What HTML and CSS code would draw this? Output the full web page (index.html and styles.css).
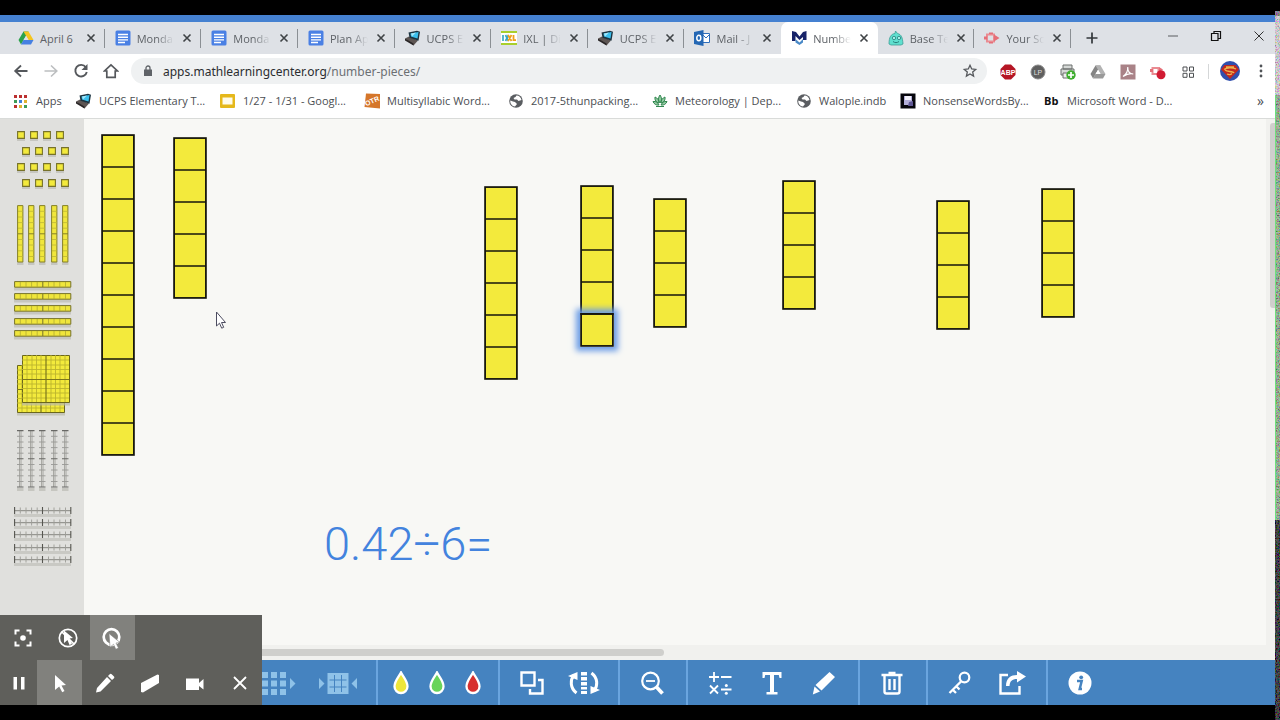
FILE: index.html
```
<!DOCTYPE html>
<html lang="en">
<head>
<meta charset="utf-8">
<title>Number Pieces</title>
<link rel="stylesheet" href="styles.css">
</head>
<body>
<svg class="defs" width="0" height="0" aria-hidden="true">
  <defs>
    <pattern id="unit" x="1" y="1" width="32" height="32" patternUnits="userSpaceOnUse"><path d="M0 0H32V32H0Z" fill="#f3ea3c" stroke="#15150c" stroke-width="1.7"/></pattern>
    <symbol id="one" viewBox="0 0 8 11"><path d="M0 7h8v3H0z" fill="#c6c6c0"/><path d="M.6.6h6.800v6.800H.6z" fill="#f3ea3c" stroke="#77722a" stroke-width="1.1"/></symbol>
    <symbol id="tenv" viewBox="0 0 7 61"><path d="M0 57h6.500v3H0z" fill="#c6c6c0"/><path d="M.6.6h5.300v56.400H.6z" fill="#f0e63c" stroke="#858026" stroke-width="1"/><path d="M1 6.300h5M1 12h5M1 17.600h5M1 23.200h5M1 34.500h5M1 40h5M1 45.800h5M1 51.500h5" stroke="#bdb535" stroke-width=".8"/><path d="M1 28.800h5" stroke="#858026"/></symbol>
    <symbol id="tenh" viewBox="0 0 58 10"><path d="M0 6.500h57v3H0z" fill="#c6c6c0"/><path d="M.6.6h56.200v5.600H.6z" fill="#f0e63c" stroke="#77722a" stroke-width="1"/><path d="M6.300 1v5M12 1v5M17.600 1v5M23.200 1v5M34.500 1v5M40 1v5M45.800 1v5M51.500 1v5" stroke="#b3ab30" stroke-width=".8"/><path d="M28.800 1v5" stroke="#77722a"/></symbol>
    <symbol id="hundred" viewBox="0 0 48 51"><path d="M0 47h48v3.500H0z" fill="#b9b9a8" opacity=".7"/><path d="M.5.5h47v47H.5z" fill="#f3ea3c" stroke="#6b671c"/><path d="M5 0v47M10 0v47M14.500 0v47M19 0v47M29 0v47M33.500 0v47M38 0v47M43 0v47M0 5h47M0 10h47M0 14.500h47M0 19h47M0 29h47M0 33.500h47M0 38h47M0 43h47" stroke="#bcb42e" stroke-width=".9"/><path d="M24 0v47M0 24.500h47" stroke="#7c771d" stroke-width="1.200"/></symbol>
    <symbol id="linev" viewBox="0 0 7 61"><path d="M0 58h6.500v3H0z" fill="#c6c6c0"/><path d="M2.500 0v57M4 0v57" stroke="#9a9a96" stroke-width=".8"/><path d="M0 6.300h6.500M0 12h6.500M0 17.600h6.500M0 23.200h6.500M0 34.500h6.500M0 40h6.500M0 45.800h6.500M0 51.500h6.500" stroke="#999995" stroke-width=".9"/><path d="M0 .6h6.500M0 28.800h6.500M0 57h6.500" stroke="#696966" stroke-width="1.100"/></symbol>
    <symbol id="lineh" viewBox="0 0 58 11"><path d="M0 7h57v3H0z" fill="#c9c9c4"/><path d="M0 3.700h57" stroke="#85857f"/><path d="M6.300 .5v6M12 .5v6M17.600 .5v6M23.200 .5v6M34.500 .5v6M40 .5v6M45.800 .5v6M51.500 .5v6" stroke="#9c9c96" stroke-width=".9"/><path d="M.6 0v7M28.500 0v7M56.800 0v7" stroke="#55554f" stroke-width="1.100"/></symbol>
    <symbol id="x" viewBox="0 0 10 10"><path d="M1.500 1.500l7 7M8.500 1.500l-7 7" stroke="#3f4346" stroke-width="1.600"/></symbol>
    <symbol id="doc" viewBox="0 0 16 16"><rect x=".5" y=".5" width="15" height="15" rx="1.500" fill="#4a80e4"/><path d="M3 4.500h10M3 7.200h10M3 9.900h10M3 12.500h7" stroke="#fff" stroke-width="1.400"/></symbol>
    <symbol id="laptop" viewBox="0 0 16 16"><path d="M0 8.500l4-2 9 4-4.500 5z" fill="#5d5553"/><path d="M0 8.500l8.500 5v2L0 10.500z" fill="#292526"/><path d="M3.500 2.500L12 .8l3 1-1.500 9-9-3z" fill="#1c3441"/><path d="M5.500 3.500l8-1.500-1 6.500-6.500-2z" fill="#3cc0ee"/><path d="M6 3.600l5-1-4 4z" fill="#a5e7fa"/></symbol>
    <symbol id="globe" viewBox="0 0 16 16"><circle cx="8" cy="8" r="6.800" fill="#5a5d61"/><path d="M8.500 2.500c2.500 0 4.500 2 5 4.500l-3 1-1.500-1.500H6.500L5.500 5l2-1zM2.300 7.500L5 8.500l2 .5 2 2-2 2.600c-3-.4-5-3-4.700-6.100z" fill="#fff"/></symbol>
  </defs>
</svg>

<div class="browser">
  <header class="chrome">
    <div class="tabstrip">
      <nav class="tabs" aria-label="Tabs">
        <div class="tab"><svg class="ico" viewBox="0 0 16 16"><path d="M5.500 1.500h5L8 6 3 14.500.5 10z" fill="#2ba24c"/><path d="M5.500 1.500h5l5 8.500h-5z" fill="#f5c51e"/><path d="M5.500 10h10L13 14.500H3z" fill="#4680e2"/><path d="M8 5.700l2.500 4.300h-5z" fill="#dee1e6"/></svg><span>April 6</span><button aria-label="Close tab"><svg><use href="#x"/></svg></button></div>
        <div class="tab"><svg class="ico"><use href="#doc"/></svg><span>Monda</span><button aria-label="Close tab"><svg><use href="#x"/></svg></button></div>
        <div class="tab"><svg class="ico"><use href="#doc"/></svg><span>Monda</span><button aria-label="Close tab"><svg><use href="#x"/></svg></button></div>
        <div class="tab"><svg class="ico"><use href="#doc"/></svg><span>Plan Ap</span><button aria-label="Close tab"><svg><use href="#x"/></svg></button></div>
        <div class="tab"><svg class="ico"><use href="#laptop"/></svg><span>UCPS E</span><button aria-label="Close tab"><svg><use href="#x"/></svg></button></div>
        <div class="tab"><svg class="ico" viewBox="0 0 16 16"><path fill="#fff" d="M0 1h16v14H0z"/><path fill="#a9cf2d" d="M0 1h16v2H0zM0 13h16v2H0z"/><path d="M2 5v6M4.500 5l3 6M7.500 5l-3 6" stroke="#3aa8c8" stroke-width="1.700"/><path d="M7 5l3.500 6M10.500 5L7 11M12.500 5v5.200H15" fill="none" stroke="#f0a01d" stroke-width="1.800"/></svg><span>IXL | Di</span><button aria-label="Close tab"><svg><use href="#x"/></svg></button></div>
        <div class="tab"><svg class="ico"><use href="#laptop"/></svg><span>UCPS E</span><button aria-label="Close tab"><svg><use href="#x"/></svg></button></div>
        <div class="tab last"><svg class="ico" viewBox="0 0 16 16"><path d="M8 3.500h7.500v9H8z" fill="#fff" stroke="#2f6ebb"/><path d="M9 5l3 3 3-3" fill="none" stroke="#2f6ebb"/><path d="M0 2l9.500-2v16L0 14z" fill="#2467b4"/><ellipse cx="4.800" cy="8" rx="2" ry="2.700" fill="none" stroke="#fff" stroke-width="1.500"/></svg><span>Mail - J</span><button aria-label="Close tab"><svg><use href="#x"/></svg></button></div>
        <div class="tab active"><svg class="ico" viewBox="0 0 16 16"><path d="M1 1l4 1 3.500 4.500L12 2l3.500-1v9H12V7L8.500 10 4.500 6v5H1z" fill="#172369"/><path d="M4.500 9l4 3.500L12 9v3.500L8.500 15l-4-2.500z" fill="#4a8ac8"/></svg><span>Numbe</span><button aria-label="Close tab"><svg><use href="#x"/></svg></button></div>
        <div class="tab"><svg class="ico" viewBox="0 0 16 16"><path d="M1 14C1 7 3 4 7 3.500L7.500 1l2 2.500c4 1 5 4 5.500 10.500L13 15H3z" fill="#5fe0cf" stroke="#3c9d96" stroke-width=".8"/><circle cx="6" cy="8" r="1.700" fill="#a2f0e7" stroke="#287f7c" stroke-width=".8"/><circle cx="11" cy="8" r="1.700" fill="#a2f0e7" stroke="#287f7c" stroke-width=".8"/><path d="M5 11.500c2 1.500 4 1.500 6 0" fill="none" stroke="#287f7c"/></svg><span>Base Te</span><button aria-label="Close tab"><svg><use href="#x"/></svg></button></div>
        <div class="tab"><svg class="ico" viewBox="0 0 16 16"><path d="M3 4.500h7v7H3z" fill="none" stroke="#ea8b92" stroke-width="2"/><path d="M10 4.500l5.500 3.500-5.500 3.500zM0 6.500h3v3H0zM5 2.500h4V4H5zM5 12h4v1.500H5z" fill="#e56f78"/></svg><span>Your Sc</span><button aria-label="Close tab"><svg><use href="#x"/></svg></button></div>
      </nav>
      <button class="newtab" aria-label="New tab"><svg viewBox="0 0 12 12"><path d="M6 .5v11M.5 6h11" stroke="#33373b" stroke-width="1.700"/></svg></button>
      <div class="winctl">
        <button aria-label="Minimize"><svg viewBox="0 0 12 12"><path d="M1 6h10" stroke="#5a5d61"/></svg></button>
        <button aria-label="Restore"><svg viewBox="0 0 12 12"><path d="M1.500 3.500h6.500v7H1.500zM4 3.500v-2h6.500v7H8" fill="none" stroke="#111" stroke-width="1.200"/></svg></button>
        <button aria-label="Close"><svg viewBox="0 0 12 12"><path d="M1.500 1.500l9 9M10.500 1.500l-9 9" stroke="#333"/></svg></button>
      </div>
    </div>

    <div class="navbar">
      <button aria-label="Back"><svg viewBox="0 0 16 16"><path d="M14.500 8H2.500M8 2.500L2.200 8 8 13.500" fill="none" stroke="#55585c" stroke-width="1.800"/></svg></button>
      <button aria-label="Forward"><svg viewBox="0 0 16 16"><path d="M1.500 8h12M8 2.500L13.800 8 8 13.500" fill="none" stroke="#bcbec0" stroke-width="1.600"/></svg></button>
      <button aria-label="Reload"><svg viewBox="0 0 16 16"><path d="M12.800 4.200A5.800 5.800 0 1 0 13.800 9" fill="none" stroke="#55585c" stroke-width="1.900"/><path d="M14.500 1v6h-6z" fill="#55585c"/></svg></button>
      <button aria-label="Home"><svg viewBox="0 0 16 16"><path d="M8 1.800L1.500 8H3.800v6.300h8.400V8h2.300z" fill="none" stroke="#55585c" stroke-width="1.700"/></svg></button>
      <div class="omnibox">
        <svg class="lock" viewBox="0 0 10 12"><path d="M1 4.500h8V11H1z" fill="#5f6368"/><path d="M3 5V3a2 2 0 0 1 4 0v2" fill="none" stroke="#5f6368" stroke-width="1.300"/></svg>
        <label class="url"><b>apps.mathlearningcenter.org</b>/number-pieces/<input aria-label="Address"></label>
        <button aria-label="Bookmark this page"><svg viewBox="0 0 16 16"><path d="M8 2.300l1.700 3.700 4 .4-3 2.700.9 4L8 11l-3.600 2.100.9-4-3-2.700 4-.4z" fill="none" stroke="#55585c" stroke-width="1.300"/></svg></button>
      </div>
      <div class="exts">
        <button aria-label="ABP"><svg viewBox="0 0 16 16"><path d="M5 .5h6L15.500 5v6L11 15.500H5L.5 11V5z" fill="#b51625"/><text x="8" y="10.700" font-size="7" font-weight="bold" text-anchor="middle" fill="#fff">ABP</text></svg></button>
        <button aria-label="LP"><svg viewBox="0 0 16 16"><circle cx="8" cy="8" r="7" fill="#5f5f5f" stroke="#8a8a8a"/><text x="8" y="10.500" font-size="7" text-anchor="middle" fill="#ddd">LP</text></svg></button>
        <button aria-label="Print"><svg viewBox="0 0 16 16"><path d="M3 1h9v4H3zM1 5h13v6H1z" fill="#d5d8d6" stroke="#6c716e"/><path d="M3 9h9v5H3z" fill="#eee" stroke="#6c716e"/><circle cx="11" cy="11" r="4.700" fill="#3fae2f"/><path d="M11 8v6M8 11h6" stroke="#fff" stroke-width="1.700"/></svg></button>
        <button aria-label="Drive"><svg viewBox="0 0 16 16"><path d="M5.500 1.500h5L8 6 3 14.500.5 10z" fill="#858585"/><path d="M5.500 1.500h5l5 8.500h-5z" fill="#b3b3b3"/><path d="M5.500 10h10L13 14.500H3z" fill="#999"/><path d="M8 5.700l2.500 4.300h-5z" fill="#fff"/></svg></button>
        <button aria-label="PDF"><svg viewBox="0 0 16 16"><path d="M.5.5h15v15H.5z" fill="#a98287"/><path d="M3 12.500c3-2 5-6 4.700-9.500 0 4 2 7 5.500 7-3-.8-7 .5-10.200 2.500z" fill="none" stroke="#fff" stroke-width="1.200"/></svg></button>
        <button aria-label="Recorder"><svg viewBox="0 0 16 16"><path d="M2.500 4h6v6h-6z" fill="none" stroke="#ea8b92" stroke-width="2"/><path d="M9 3l4 2.500L9 8zM0 5h3v3H0z" fill="#e56f78"/><circle cx="11" cy="10.800" r="4.500" fill="#d11b33"/></svg></button>
        <button aria-label="Grid"><svg viewBox="0 0 16 16"><path d="M3 3h4v4H3zM9.500 3h4v4h-4zM3 9.300h4v4H3zM9.500 9.300h4v4h-4z" fill="none" stroke="#4c4f52"/></svg></button>
      </div>
      <button class="avatar" aria-label="Profile"><svg viewBox="0 0 20 20"><circle cx="10" cy="10" r="10" fill="#304fae"/><path d="M4.500 4h11L19 8.500 10 18 1 8.500z" fill="#c2281f"/><path d="M6 6h8M4 8.500c3-2.500 9-2 12-.5M5 9c2 2 8 1 9 3M7 13c2 .8 4 .5 5-.5" fill="none" stroke="#ecb44b" stroke-width="1.300"/></svg></button>
      <button class="menu" aria-label="Menu"><svg viewBox="0 0 16 16"><circle cx="8" cy="3" r="1.400"/><circle cx="8" cy="8" r="1.400"/><circle cx="8" cy="13" r="1.400"/></svg></button>
    </div>

    <nav class="bookmarks" aria-label="Bookmarks">
      <a class="apps" href="#"><svg class="ico" viewBox="0 0 16 16"><path d="M0 2h3v3H0zM5 2h3v3H5zM10 2h3v3h-3zM0 12h3v3H0z" fill="#bb3030"/><path d="M0 7h3v3H0zM10 12h3v3h-3z" fill="#3f9c57"/><path d="M5 7h3v3H5z" fill="#4080d8"/><path d="M10 7h3v3h-3zM5 12h3v3H5z" fill="#dfb12f"/></svg>Apps</a>
      <a href="#"><svg class="ico"><use href="#laptop"/></svg>UCPS Elementary T...</a>
      <a href="#"><svg class="ico" viewBox="0 0 16 16"><rect x="0" y="1" width="15" height="14" rx="1" fill="#e5b81b"/><path d="M2.500 4.500h10v7h-10z" fill="#fffbe9"/></svg>1/27 - 1/31 - Googl...</a>
      <a href="#"><svg class="ico" viewBox="0 0 16 16"><path d="M2 .5l14 .5v14.500L.5 14z" fill="#d5762a"/><text x="8" y="10.500" font-size="7" font-weight="bold" fill="#fff" text-anchor="middle" transform="rotate(-24 8 8)">OTR</text></svg>Multisyllabic Word...</a>
      <a href="#"><svg class="ico"><use href="#globe"/></svg>2017-5thunpacking...</a>
      <a href="#"><svg class="ico" viewBox="0 0 16 16"><path d="M8 2c2 3 2 5 0 8-2-3-2-5 0-8zM3 4c2.500 1 4 3 4 6-3-.5-4.500-3-4-6zM13 4c-2.500 1-4 3-4 6 3-.5 4.500-3 4-6zM1 8.500c3-.5 5 1 6 3.500-3 .5-5-1-6-3.500zM15 8.500c-3-.5-5 1-6 3.500 3 .5 5-1 6-3.500z" fill="#93c9a2" stroke="#318850"/><path d="M4 13.500h8" stroke="#318850"/></svg>Meteorology | Dep...</a>
      <a class="short" href="#"><svg class="ico"><use href="#globe"/></svg>Walople.indb</a>
      <a href="#"><svg class="ico" viewBox="0 0 16 16"><path d="M.5.5h15v15H.5z" fill="#06060c"/><path d="M4 3h8v9H4z" fill="#b3aed9"/><path d="M5 3h6v4H5z" fill="#f2f1fa"/><path d="M9 9l4-1v5H8z" fill="#5f5794"/></svg>NonsenseWordsBy...</a>
      <a href="#"><b class="ico">Bb</b>Microsoft Word - D...</a>
      <button class="more" aria-label="More bookmarks">»</button>
    </nav>
  </header>

  <main class="app">
    <aside class="palette">
      <button aria-label="Ones"><svg viewBox="0 119 84 78">
        <g id="row"><use href="#one" x="17" y="131" width="8" height="11"/><use href="#one" x="30" y="131" width="8" height="11"/><use href="#one" x="43" y="131" width="8" height="11"/><use href="#one" x="56" y="131" width="8" height="11"/></g>
        <use href="#row" x="5" y="16"/><use href="#row" y="32"/><use href="#row" x="5" y="48"/></svg></button>
      <button aria-label="Vertical tens"><svg viewBox="0 197 84 76"><use href="#tenv" x="17" y="205" width="7" height="61"/><use href="#tenv" x="28" y="205" width="7" height="61"/><use href="#tenv" x="39" y="205" width="7" height="61"/><use href="#tenv" x="51" y="205" width="7" height="61"/><use href="#tenv" x="62" y="205" width="7" height="61"/></svg></button>
      <button aria-label="Horizontal tens"><svg viewBox="0 273 84 76"><use href="#tenh" x="14" y="281" width="58" height="10"/><use href="#tenh" x="14" y="293" width="58" height="10"/><use href="#tenh" x="14" y="305" width="58" height="10"/><use href="#tenh" x="14" y="318" width="58" height="10"/><use href="#tenh" x="14" y="330" width="58" height="10"/></svg></button>
      <button aria-label="Hundreds"><svg viewBox="0 349 84 74"><use href="#hundred" x="17" y="365" width="48" height="51"/><use href="#hundred" x="22" y="355" width="48" height="51"/></svg></button>
      <button aria-label="Vertical lines"><svg viewBox="0 423 84 76"><use href="#linev" x="17" y="430" width="7" height="61"/><use href="#linev" x="28" y="430" width="7" height="61"/><use href="#linev" x="39" y="430" width="7" height="61"/><use href="#linev" x="51" y="430" width="7" height="61"/><use href="#linev" x="62" y="430" width="7" height="61"/></svg></button>
      <button aria-label="Horizontal lines"><svg viewBox="0 499 84 76"><use href="#lineh" x="14" y="507" width="58" height="11"/><use href="#lineh" x="14" y="519" width="58" height="11"/><use href="#lineh" x="14" y="531" width="58" height="11"/><use href="#lineh" x="14" y="544" width="58" height="11"/><use href="#lineh" x="14" y="556" width="58" height="11"/></svg></button>
    </aside>
    <section class="board" aria-label="Workspace">
      <svg class="piece p1" width="34" height="322"><rect x="1" y="1" width="32" height="320"/></svg>
      <svg class="piece p2" width="34" height="162"><rect x="1" y="1" width="32" height="160"/></svg>
      <svg class="piece p3" width="34" height="194"><rect x="1" y="1" width="32" height="192"/></svg>
      <svg class="piece p4" width="34" height="130"><rect x="1" y="1" width="32" height="128"/></svg>
      <svg class="piece p5 selected" width="34" height="34"><rect x="1" y="1" width="32" height="32"/></svg>
      <svg class="piece p6" width="34" height="130"><rect x="1" y="1" width="32" height="128"/></svg>
      <svg class="piece p7" width="34" height="130"><rect x="1" y="1" width="32" height="128"/></svg>
      <svg class="piece p8" width="34" height="130"><rect x="1" y="1" width="32" height="128"/></svg>
      <svg class="piece p9" width="34" height="130"><rect x="1" y="1" width="32" height="128"/></svg>
      <svg class="cursor" viewBox="0 0 12 19" width="12" height="19"><path d="M1.500 1v14l3-2.800 2.200 5 2-.9-2.200-4.800h4z" fill="#fff" stroke="#4d4d60"/></svg>
      <p class="equation">0.42÷6=</p>
    </section>
    <div class="vscroll"><div></div></div>
    <div class="hscroll"><div></div></div>
  </main>

  <footer class="dock">
    <div class="group first">
      <button aria-label="Break apart"><svg class="pale" viewBox="0 0 44 24"><path d="M6 1h6v6H6zM15 1h6v6h-6zM24 1h6v6h-6zM6 9.500h6v6H6zM15 9.500h6v6h-6zM24 9.500h6v6h-6zM6 18h6v6H6zM15 18h6v6h-6zM24 18h6v6h-6zM34 7v11l5.500-5.500z"/></svg></button>
      <button aria-label="Group"><svg class="pale" viewBox="0 0 44 24"><path d="M11.500 2h21v21h-21zM3 7v11l5.500-5.500zM41 7v11l-5.500-5.500z"/><path d="M18.500 4v17M25.500 4v17M13.500 9h17M13.500 16h17" stroke="#4583c0"/></svg></button>
    </div>
    <div class="group drops">
      <button aria-label="Yellow"><svg viewBox="0 0 18 24"><path d="M9 1.500C6.500 6.500 2.500 10 2.500 15.500a6.500 6.500 0 0 0 13 0C15.500 10 11.500 6.500 9 1.500z" fill="#eee63a" stroke="#fff" stroke-width="2.300"/></svg></button>
      <button aria-label="Green"><svg viewBox="0 0 18 24"><path d="M9 1.500C6.500 6.500 2.500 10 2.500 15.500a6.500 6.500 0 0 0 13 0C15.500 10 11.500 6.500 9 1.500z" fill="#69d45a" stroke="#fff" stroke-width="2.300"/></svg></button>
      <button aria-label="Red"><svg viewBox="0 0 18 24"><path d="M9 1.500C6.500 6.500 2.500 10 2.500 15.500a6.500 6.500 0 0 0 13 0C15.500 10 11.500 6.500 9 1.500z" fill="#d7302f" stroke="#fff" stroke-width="2.300"/></svg></button>
    </div>
    <div class="group">
      <button aria-label="Duplicate"><svg viewBox="0 0 24 24"><path d="M1.500 1.500h13v13h-13zM18 9h4.500v13.500H10V18" fill="none" stroke="#fff" stroke-width="2.400"/></svg></button>
      <button aria-label="Rotate"><svg class="wide" viewBox="0 0 32 24"><path d="M13 1h6v3.500h-6zM13 6h6v3.500h-6zM13 11h6v3.500h-6zM13 16h6v2.500h-6zM13 20h6v3h-6z" fill="#fff"/><path d="M8.500 22C2 17 2 9 6 4M23.500 2c6.500 5 6.500 13 2.500 18" fill="none" stroke="#fff" stroke-width="3"/><path d="M0 5l9.500-4v8zM32 19l-9.500 4v-8z" fill="#fff"/></svg></button>
    </div>
    <div class="group">
      <button aria-label="Zoom out"><svg viewBox="0 0 24 24"><circle cx="10.500" cy="10" r="8.300" fill="none" stroke="#fff" stroke-width="2.200"/><path d="M6 10h9" stroke="#fff" stroke-width="1.800"/><path d="M16 15.500l6.500 7" stroke="#fff" stroke-width="3.700"/></svg></button>
    </div>
    <div class="group">
      <button aria-label="Math"><svg viewBox="0 0 24 24"><path d="M1 6h10M6 1v10M13 6h10.500M2 14.500l8 8M10 14.500l-8 8M13 18.500h10.500" stroke="#fff" stroke-width="1.800"/><circle cx="18.300" cy="14.500" r="1.500" fill="#fff"/><circle cx="18.300" cy="22.300" r="1.500" fill="#fff"/></svg></button>
      <button aria-label="Text"><svg viewBox="0 0 24 24"><path d="M2.500 1h19v6h-2l-.7-3H14v17h3.500v2.500h-11V21H10V4H5.200l-.7 3h-2z" fill="#fff"/></svg></button>
      <button aria-label="Draw"><svg viewBox="0 0 24 24"><path d="M17.500 1l5.500 5L9.500 19.500l-6-5.500zM2.500 15.500l5.500 5L.8 23.500z" fill="#fff"/></svg></button>
    </div>
    <div class="group">
      <button aria-label="Delete"><svg viewBox="0 0 24 24"><path d="M1.500 4h21M8.500 2h7" stroke="#fff" stroke-width="2.600"/><path d="M4.500 5v15.500q0 2 2 2h11q2 0 2-2V5M9.500 8v11M14.500 8v11" fill="none" stroke="#fff" stroke-width="2.400"/></svg></button>
    </div>
    <div class="group">
      <button aria-label="Key"><svg viewBox="0 0 24 24"><circle cx="16.500" cy="6.500" r="4.800" fill="none" stroke="#fff" stroke-width="2.200"/><path d="M13 10.500L1.500 22M4.500 18.500l3.500 3.500M8 15l3.500 3.500" stroke="#fff" stroke-width="2.300"/></svg></button>
      <button aria-label="Share"><svg class="share" viewBox="0 0 28 24"><path d="M10 4H2.500v18.500h19V15" fill="none" stroke="#fff" stroke-width="2.400"/><path d="M8 15c0-8 5-11 11-11V0l9 5.500-9 6V8c-5 0-7 2-7.500 7z" fill="#fff"/></svg></button>
    </div>
    <div class="group end">
      <button aria-label="Info"><svg viewBox="0 0 24 24"><circle cx="12" cy="12" r="11.500" fill="#fff"/><circle cx="13.200" cy="6.300" r="1.900" fill="#4583c0"/><path d="M9 10h4.700l-2 8H14" fill="none" stroke="#4583c0" stroke-width="2.500"/></svg></button>
    </div>
  </footer>

  <div class="recorder">
    <div class="rrow">
      <button aria-label="Focus"><svg viewBox="0 0 20 20"><path d="M2.500 6.500v-4h4M13.500 2.500h4v4M17.500 13.500v4h-4M6.500 17.500h-4v-4" fill="none" stroke="#fff" stroke-width="2"/><circle cx="10" cy="10" r="2.800" fill="#fff"/></svg></button>
      <button aria-label="Hide cursor"><svg viewBox="0 0 20 20"><circle cx="10" cy="10" r="8.700" fill="none" stroke="#fff" stroke-width="1.700"/><path d="M4 4l12 12" stroke="#fff" stroke-width="1.700"/><path d="M6 2.500l9 7.500-3.500.5L14 16l-2.500 1-2-5L6 15z" fill="#fff"/></svg></button>
      <button class="on" aria-label="Highlight clicks"><svg class="big" viewBox="0 0 24 24"><circle cx="10.500" cy="11" r="7.800" fill="none" stroke="#fff" stroke-width="2.700"/><path d="M8 7.500l11 9-4 .5 2.500 5-2.700 1.300-2.300-5-3.500 3z" fill="#fff" stroke="#81817d" stroke-width=".6"/></svg></button>
    </div>
    <div class="rrow">
      <button class="pause" aria-label="Pause"><svg viewBox="0 0 20 20"><path d="M4.500 4h3.500v12.500H4.500zM12 4h3.500v12.500H12z" fill="#fff"/></svg></button>
      <button class="on" aria-label="Pointer"><svg viewBox="0 0 20 20"><path d="M5 2l11 10-4.500.5 3 5.500-2.300 1.200-3-5.700L5 17z" fill="#fff"/></svg></button>
      <button aria-label="Pen"><svg viewBox="0 0 20 20"><path d="M12 4l4 4L5.500 18.500l-4.500 1 1-4.500zM13 3l2-2q.8-.6 1.700.2l2.300 2.300q.8.900 0 1.700L17 7z" fill="#fff"/></svg></button>
      <button aria-label="Eraser"><svg viewBox="0 0 20 20"><path d="M1 10L17.500 1.500l1.500.6V10L3 19.500l-2-.6z" fill="#fff"/></svg></button>
      <button aria-label="Camera"><svg viewBox="0 0 20 20"><path d="M1 5.500h13V10l4.500-4v10.500L14 13v4H1z" fill="#fff"/></svg></button>
      <button aria-label="Close"><svg viewBox="0 0 20 20"><path d="M4 4l12 12M16 4L4 16" stroke="#fff" stroke-width="1.800"/></svg></button>
    </div>
  </div>
</div>

<svg class="static" aria-hidden="true">
  <filter id="grain" x="0" y="0" width="1" height="1"><feTurbulence type="fractalNoise" baseFrequency=".7" numOctaves="2" seed="4"/><feColorMatrix values="3 0 0 0 -1  0 3 0 0 -1  0 0 3 0 -1  0 0 0 0 1"/></filter>
  <rect width="5" height="100%" fill="#04040a"/>
  <rect width="5" height="5" fill="#77657f"/><rect y="5" width="5" height="79" fill="#d7d0d8"/><rect y="84" width="5" height="425" fill="#84a67e"/>
  <rect width="5" height="100%" filter="url(#grain)" opacity=".35"/>
  <rect y="84" width="1" height="425" fill="#6fe07d"/>
</svg>
</body>
</html>
```
FILE: styles.css
```
* { box-sizing: border-box; }
body {
  margin: 0;
  display: grid;
  grid-template-columns: minmax(0, 1fr) 5px;
  height: 100vh;
  overflow: hidden;
  background: #000;
  font-family: "Open Sans", "Noto Sans", sans-serif;
  font-size: 11px;
  color: #4b4e52;
}
button {
  border: 0;
  padding: 0;
  background: none;
  color: inherit;
  font: inherit;
  display: grid;
  place-items: center;
  flex: none;
}
svg { display: block; }
.defs { position: absolute; }
.ico { width: 16px; height: 16px; flex: none; }
.static { width: 5px; height: 100%; padding-top: 11px; }

.browser {
  position: relative;
  display: flex;
  flex-direction: column;
  padding: 15px 0;
  min-height: 0;
}

/* tab strip */
.tabstrip {
  display: flex;
  height: 39px;
  border-top: 7px solid #4581d1;
  background: #dee1e6;
  padding-left: 8px;
}
.tabs { display: flex; flex: 0 1 1063px; min-width: 0; }
.tab {
  position: relative;
  flex: 1 1 0;
  min-width: 0;
  display: flex;
  align-items: center;
  padding: 0 9px 0 10px;
  gap: 6px;
}
.tab::after {
  content: "";
  position: absolute;
  right: 0;
  top: 7px;
  width: 1px;
  height: 19px;
  background: #8b8f94;
}
.tab.last::after, .tab.active::after { display: none; }
.tab span {
  flex: 1;
  white-space: nowrap;
  color: #5e6267;
  -webkit-mask-image: linear-gradient(90deg, #000 50%, transparent 95%);
  mask-image: linear-gradient(90deg, #000 50%, transparent 95%);
}
.tab:first-child span { -webkit-mask-image: none; mask-image: none; }
.tab button, .tab button svg { width: 10px; height: 10px; }
.tab.active { background: #fff; border-radius: 7px 7px 0 0; }
.newtab { width: 42px; }
.newtab svg { width: 12px; height: 12px; }
.winctl { display: flex; margin-left: auto; height: 28px; }
.winctl button { width: 43px; }
.winctl button:last-child { width: 38px; padding-left: 5px; }
.winctl svg { width: 12px; height: 12px; }

/* address row */
.navbar {
  display: flex;
  align-items: center;
  height: 34px;
  padding: 0 4px 0 6px;
  background: #fff;
}
.navbar > button { width: 30px; }
.navbar svg { width: 16px; height: 16px; }
.omnibox {
  display: flex;
  align-items: center;
  flex: 1;
  height: 26px;
  margin: 0 6px 0 5px;
  padding: 0 9px 0 12px;
  border-radius: 13px;
  background: #eff1f2;
}
.omnibox .lock { width: 10px; height: 12px; }
.url { display: flex; flex: 1; margin-left: 10px; font: 12px "Noto Sans", sans-serif; color: #6b6f73; }
.url b { font-weight: normal; color: #2b2d30; }
.url input { flex: 1; min-width: 0; border: 0; padding: 0; background: none; font: inherit; }
.exts { display: flex; border-right: 1px solid #d5d7d8; padding-right: 5px; }
.exts button { width: 30px; height: 15px; }
.exts text, .bookmarks text { font-family: "Liberation Sans", sans-serif; }
.navbar .avatar { width: 42px; }
.navbar .avatar svg { width: 20px; height: 20px; }
.navbar .menu { width: 20px; fill: #505357; }

/* bookmarks */
.bookmarks {
  display: flex;
  align-items: center;
  height: 31px;
  padding: 0 11px 5px 14px;
  border-bottom: 1px solid #d9dbd9;
  background: #fff;
}
.bookmarks a {
  display: flex;
  align-items: center;
  gap: 7px;
  flex: 0 0 144px;
  white-space: nowrap;
  color: #4b4e52;
  text-decoration: none;
}
.bookmarks .apps { flex-basis: 62px; gap: 6px; }
.bookmarks .short { flex-basis: 104px; }
.bookmarks b { color: #111; font-size: 11px; line-height: 16px; }
.more { margin-left: auto; font-size: 14px; line-height: 16px; }

/* workspace */
.app {
  flex: 1;
  min-height: 0;
  display: grid;
  grid-template: minmax(0, 1fr) 15px / 84px minmax(0, 1fr) 9px;
  background: #f8f8f5;
}
.palette { grid-row: 1 / 3; background: #e0e0dd; overflow: hidden; }
.palette button, .palette svg { width: 84px; }
.board { position: relative; overflow: hidden; }
.piece { position: absolute; fill: url(#unit); stroke: #15150c; stroke-width: 1.6px; }
.p1 { left: 17px; top: 15px; }
.p2 { left: 89px; top: 18px; }
.p3 { left: 400px; top: 67px; }
.p4 { left: 496px; top: 66px; }
.p5 { left: 496px; top: 194px; }
.p6 { left: 569px; top: 79px; }
.p7 { left: 698px; top: 61px; }
.p8 { left: 852px; top: 81px; }
.p9 { left: 957px; top: 69px; }
.selected { box-shadow: 0 0 6px 4px #6c9de6; }
.cursor { position: absolute; left: 131px; top: 192px; }
.equation {
  position: absolute;
  left: 240px;
  top: 397px;
  margin: 0;
  font: 300 47px/56px Roboto, sans-serif;
  color: #4383de;
}
.vscroll { background: #f1f1ee; padding: 4px 0 0 4px; }
.vscroll div { height: 185px; border-radius: 3px 0 0 3px; background: #cfcfcc; }
.hscroll { grid-column: 2 / 4; background: #f1f1ee; padding: 4px 0; }
.hscroll div { width: 580px; height: 7px; border-radius: 4px; background: #cfcfcc; }

/* app toolbar */
.dock { display: flex; height: 45px; flex: none; background: #4583c0; }
.group { display: flex; padding: 0 9px 0 5px; border-right: 2px solid #6aa5df; }
.group.first { width: 378px; padding: 0 8px; justify-content: flex-end; }
.group.drops { padding: 0 7px 0 5px; }
.group.end { border: 0; }
.group button { width: 53px; }
.group + .group button { margin-right: -1px; }
.group.first button { width: 60px; }
.group.drops button { width: 36px; margin: 0; }
.dock svg { width: 24px; height: 24px; }
.dock .pale { width: 44px; fill: #8fc2e8; }
.dock .drops svg { width: 18px; }
.dock .wide { width: 32px; }
.dock .share { width: 28px; }

/* recorder panel floats over the page */
.recorder { position: absolute; left: 0; bottom: 15px; width: 262px; background: #5f5f5b; }
.rrow { display: flex; height: 45px; }
.rrow button { width: 45px; }
.rrow .pause { width: 37px; }
.rrow .on { background: #81817d; }
.rrow svg { width: 20px; height: 20px; }
.rrow .big { width: 24px; height: 24px; }
```
